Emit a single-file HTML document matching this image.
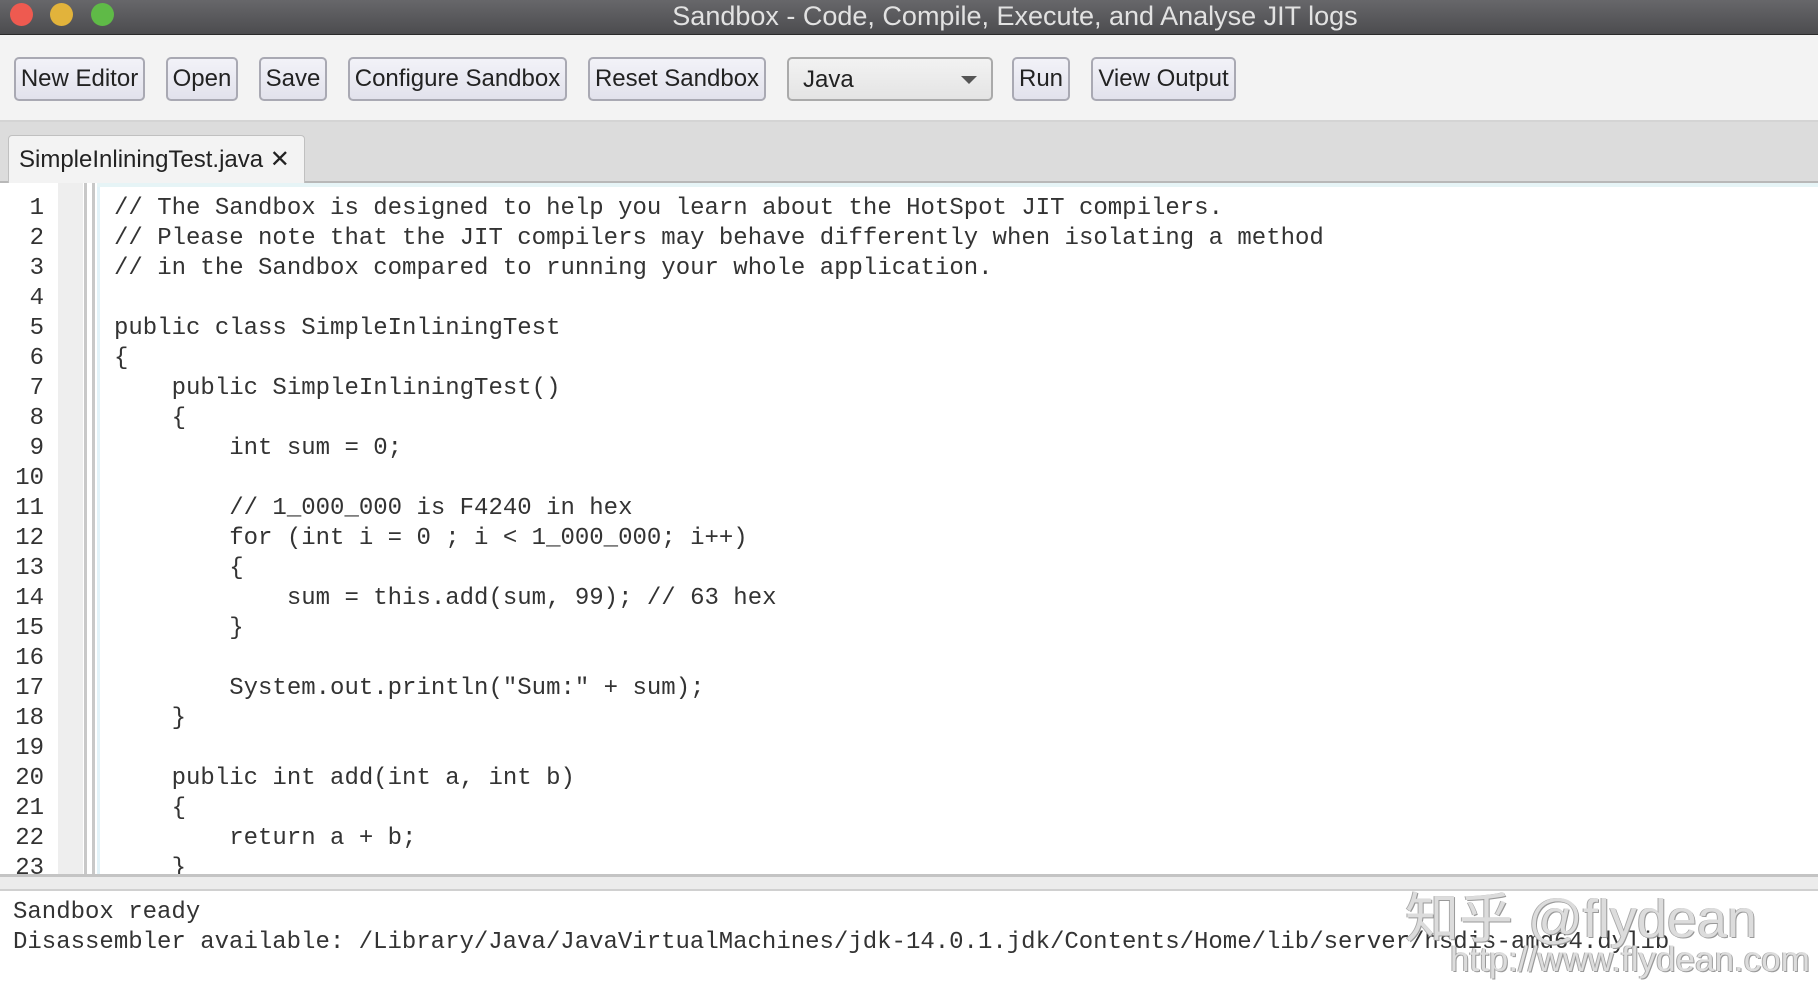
<!DOCTYPE html>
<html><head><meta charset="utf-8"><style>
*{margin:0;padding:0;box-sizing:border-box}
body{width:1818px;height:990px;overflow:hidden;background:#fff;font-family:"Liberation Sans",sans-serif;position:relative}
.title{position:absolute;left:0;top:0;width:1818px;height:35px;background:linear-gradient(#67676a,#4c4c4f);border-bottom:1px solid #2a2a2a}
.title .t{position:absolute;top:1px;text-align:center;color:#e2e2e2;font-size:27px}
.dot{position:absolute;top:3px;width:23px;height:23px;border-radius:50%}
.tool{position:absolute;left:0;top:35px;width:1818px;height:87px;background:#f3f3f3;border-bottom:2px solid #d4d4d4}
.btn{position:absolute;top:22px;height:44px;border:2px solid #a9a9b3;border-radius:5px;background:linear-gradient(#f2f2f8,#e2e2ec);font-size:24px;color:#222;line-height:40px;text-align:center;white-space:nowrap}
.tabs{position:absolute;left:0;top:122px;width:1818px;height:61px;background:#dcdcdc;border-bottom:2px solid #b8b8b8}
.tab{position:absolute;left:8px;top:13px;width:297px;height:48px;background:#f3f3f3;border:1px solid #c0c0c0;border-bottom:none;border-radius:4px 4px 0 0;font-size:24px;line-height:48px;padding-left:10px;color:#222}
.ed{position:absolute;left:0;top:183px;width:1818px;height:691px;background:#fff;overflow:hidden}
.gut{position:absolute;left:58px;top:0;width:25px;height:100%;background:#eeeeee}
.l1{position:absolute;left:84px;top:0;width:3px;height:100%;background:#c8c8c8}
.l2{position:absolute;left:92px;top:0;width:3px;height:100%;background:#c8c8c8}
.l3{position:absolute;left:97px;top:0;width:3px;height:100%;background:#e2f2f8}
.topb{position:absolute;left:97px;top:0;right:0;height:4px;background:#e6f4f6}
pre{font-family:"Liberation Mono",monospace;font-size:24px;line-height:30px;color:#333}
.nums{position:absolute;left:0;top:11px;width:44px;text-align:right}
.code{position:absolute;left:114px;top:11px}
.sep{position:absolute;left:0;top:874px;width:1818px;height:17px;background:#ececec;border-top:3px solid #c4c4c4;border-bottom:2px solid #d0d0d0}
.stat{position:absolute;left:13px;top:898px}
.wm{position:absolute;color:#dcdcdc;text-shadow:1px 1px 0 #999,-1px 0 0 #aaa;white-space:nowrap}
</style></head><body>
<div class="title">
<div class="dot" style="left:10px;background:#ee5a50"></div>
<div class="dot" style="left:50px;background:#e2b33b"></div>
<div class="dot" style="left:91px;background:#5fba47"></div>
<div class="t" style="left:0;width:2030px">Sandbox - Code, Compile, Execute, and Analyse JIT logs</div>
</div>
<div class="tool">
<div class="btn" style="left:14px;width:131px">New Editor</div>
<div class="btn" style="left:166px;width:72px">Open</div>
<div class="btn" style="left:259px;width:68px">Save</div>
<div class="btn" style="left:348px;width:219px">Configure Sandbox</div>
<div class="btn" style="left:588px;width:178px">Reset Sandbox</div>
<div class="btn" style="left:787px;width:206px;text-align:left;padding-left:14px;background:linear-gradient(#f2f2f2,#e4e4e4);border-color:#aaa;line-height:42px">Java<span style="position:absolute;right:14px;top:17px;width:0;height:0;border-left:8px solid transparent;border-right:8px solid transparent;border-top:8px solid #555"></span></div>
<div class="btn" style="left:1012px;width:58px">Run</div>
<div class="btn" style="left:1091px;width:145px">View Output</div>
</div>
<div class="tabs"><div class="tab">SimpleInliningTest.java ✕</div></div>
<div class="ed">
<div class="gut"></div><div class="l1"></div><div class="l2"></div><div class="l3"></div><div class="topb"></div>
<pre class="nums">1
2
3
4
5
6
7
8
9
10
11
12
13
14
15
16
17
18
19
20
21
22
23</pre>
<pre class="code">// The Sandbox is designed to help you learn about the HotSpot JIT compilers.
// Please note that the JIT compilers may behave differently when isolating a method
// in the Sandbox compared to running your whole application.

public class SimpleInliningTest
{
    public SimpleInliningTest()
    {
        int sum = 0;

        // 1_000_000 is F4240 in hex
        for (int i = 0 ; i &lt; 1_000_000; i++)
        {
            sum = this.add(sum, 99); // 63 hex
        }

        System.out.println("Sum:" + sum);
    }

    public int add(int a, int b)
    {
        return a + b;
    }</pre>
</div>
<div class="sep"></div>
<pre class="stat">Sandbox ready
Disassembler available: /Library/Java/JavaVirtualMachines/jdk-14.0.1.jdk/Contents/Home/lib/server/hsdis-amd64.dylib</pre>
<div class="wm" style="left:1405px;top:874px;font-size:54px;font-family:'Liberation Sans','Noto Sans CJK SC',sans-serif">知乎 @flydean</div>
<div class="wm" style="left:1450px;top:940px;font-size:35px">http://www.flydean.com</div>
</body></html>
